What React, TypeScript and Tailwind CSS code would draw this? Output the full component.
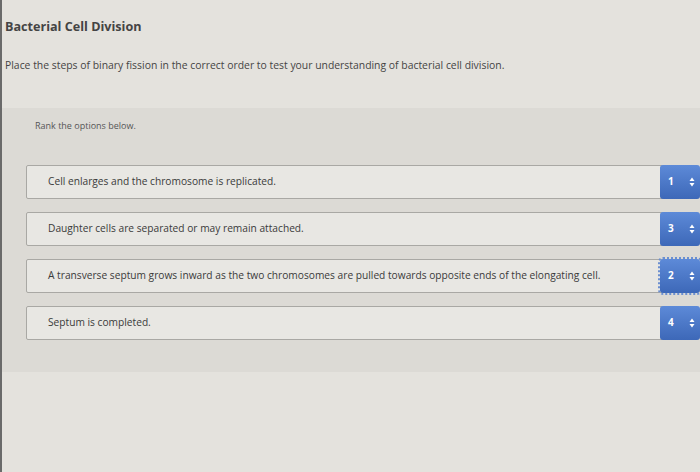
import React from "react";

const rows = [
  { text: "Cell enlarges and the chromosome is replicated.", n: "1", focus: false },
  { text: "Daughter cells are separated or may remain attached.", n: "3", focus: false },
  {
    text: "A transverse septum grows inward as the two chromosomes are pulled towards opposite ends of the elongating cell.",
    n: "2",
    focus: true,
  },
  { text: "Septum is completed.", n: "4", focus: false },
];

function Arrows() {
  return (
    <svg width="6" height="10" viewBox="0 0 6 10">
      <path d="M3 0.5 L5.5 4 L0.5 4 Z" fill="#fff" />
      <path d="M3 9.5 L5.5 6 L0.5 6 Z" fill="#fff" />
    </svg>
  );
}

export default function App() {
  return (
    <div
      className="w-[700px] h-[472px] bg-[#e4e2dd] border-l-2 border-[#6a6a6a] overflow-hidden text-[#3f3f3f]"
      style={{ fontFamily: "'Open Sans', Lato, sans-serif" }}
    >
      <div className="h-[108px] pl-[3px]">
        <div className="pt-[18px] text-[12.6px] font-bold text-[#444]">Bacterial Cell Division</div>
        <div className="mt-[21px] text-[10.4px] text-[#444]">
          Place the steps of binary fission in the correct order to test your understanding of bacterial cell division.
        </div>
      </div>
      <div className="h-[264px] bg-[#dcdad5] pt-[11px]">
        <div className="pl-[33px] text-[9px] text-[#555]">Rank the options below.</div>
        <div className="mt-[32px] flex flex-col gap-[13px] pl-[24px]">
          {rows.map((r) => (
            <div key={r.n} className="flex items-center h-[34px]">
              <div className="flex-1 h-full border border-[#a9a8a4] rounded-[2px] bg-[#e8e7e3] flex items-center pl-[21px] text-[10.2px] text-[#3a3a3a]">
                {r.text}
              </div>
              <div
                className={
                  r.focus
                    ? "w-[40px] h-[34px] rounded-[3px] outline-dotted outline-2 outline-[#6b8fd0] bg-gradient-to-b from-[#5d8ad8] to-[#3d68b8] flex items-center justify-between pl-[8px] pr-[5px] text-white text-[10px] font-bold -ml-[4px]"
                    : "w-[40px] h-[34px] rounded-[3px] bg-gradient-to-b from-[#5d8ad8] to-[#3d68b8] flex items-center justify-between pl-[8px] pr-[5px] text-white text-[10px] font-bold -ml-[4px]"
                }
              >
                <span>{r.n}</span>
                <Arrows />
              </div>
            </div>
          ))}
        </div>
      </div>
    </div>
  );
}
